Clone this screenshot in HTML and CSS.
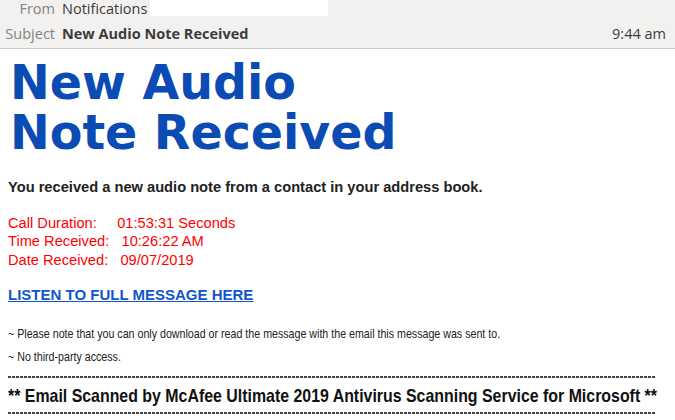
FILE: index.html
```html
<!DOCTYPE html>
<html>
<head>
<meta charset="utf-8">
<link rel="stylesheet" href="styles.css">
</head>
<body>
<div class="header">
  <div class="row from-row">
    <span class="label">From</span>
    <span class="value">Notifications</span>
    <span class="addr"></span>
  </div>
  <div class="row subject-row">
    <span class="label">Subject</span>
    <span class="value subject">New Audio Note Received</span>
    <span class="time">9:44 am</span>
  </div>
</div>
<div class="body">
  <h1 class="title">New Audio<br>Note Received</h1>
  <p class="lead">You received a new audio note from a contact in your address book.</p>
  <div class="details">
    <div>Call Duration:&nbsp;&nbsp;&nbsp;&nbsp; 01:53:31 Seconds</div>
    <div>Time Received:&nbsp;&nbsp; 10:26:22 AM</div>
    <div>Date Received:&nbsp;&nbsp; 09/07/2019</div>
  </div>
  <p class="link-p"><a class="link" href="#">LISTEN TO FULL MESSAGE HERE</a></p>
  <p class="note"><span class="narrow">~ Please note that you can only download or read the message with the email this message was sent to.</span></p>
  <p class="note"><span class="narrow">~ No third-party access.</span></p>
  <div class="dashes"></div>
  <div class="scanned"><span class="narrow wide">** Email Scanned by McAfee Ultimate 2019 Antivirus Scanning Service for Microsoft **</span></div>
  <div class="dashes"></div>
</div>
</body>
</html>
```
FILE: styles.css
```css
html, body {
  margin: 0;
  padding: 0;
  background: #ffffff;
  overflow: hidden;
}
body {
  width: 675px;
  height: 420px;
}
.header {
  background: #f2f1f0;
  border-bottom: 1px solid #cdcbc8;
  height: 49px;
  box-sizing: border-box;
  font-family: "Open Sans", "DejaVu Sans", sans-serif;
  font-size: 14.5px;
}
.row {
  display: flex;
  align-items: center;
  height: 16px;
}
.subject-row {
  margin-top: 9px;
}
.label {
  width: 55px;
  text-align: right;
  color: #838383;
  margin-right: 7px;
}
.value {
  color: #3c3c3c;
}
.addr {
  background: #ffffff;
  width: 178px;
  height: 16px;
  margin-left: 3px;
  align-self: flex-start;
}
.subject {
  font-weight: bold;
}
.time {
  margin-left: auto;
  margin-right: 9px;
  color: #3c3c3c;
}
.body {
  padding: 0 8px;
  font-family: "Liberation Sans", Arial, sans-serif;
  overflow: hidden;
}
.title {
  font-family: "DejaVu Sans", sans-serif;
  font-weight: bold;
  font-size: 47.5px;
  line-height: 50px;
  color: #0b4bb4;
  margin: 9px 0 0 2px;
}
.lead {
  font-size: 14.67px;
  font-weight: bold;
  color: #222222;
  margin: 21px 0 0 0;
}
.details {
  color: #ff0000;
  font-size: 14.67px;
  line-height: 18.4px;
  margin-top: 19px;
}
.link-p {
  margin: 17px 0 0 0;
  font-size: 15px;
  font-weight: bold;
}
.link {
  color: #1155cc;
}
.narrow {
  display: inline-block;
  white-space: nowrap;
  transform: scaleX(0.82);
  transform-origin: 0 50%;
}
.narrow.wide {
  transform: scaleX(0.837);
}
.note {
  font-size: 13px;
  line-height: 15px;
  color: #222222;
  margin: 23px 0 0 0;
  overflow: hidden;
}
.note + .note {
  margin-top: 8px;
}
.dashes {
  width: 648px;
  height: 2px;
  background: repeating-linear-gradient(90deg, #444 0 3px, transparent 3px 4px);
  margin-top: 12px;
}
.scanned {
  font-weight: bold;
  font-size: 19px;
  line-height: 22px;
  color: #111;
  margin-top: 7px;
  white-space: nowrap;
  overflow: hidden;
}
.scanned + .dashes {
  margin-top: 5px;
}
```
